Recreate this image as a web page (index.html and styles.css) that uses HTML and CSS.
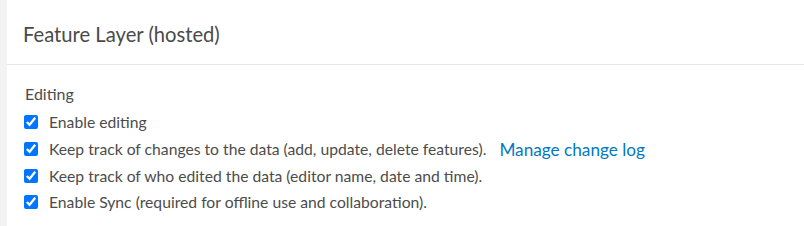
FILE: index.html
```html
<!DOCTYPE html>
<html lang="en">
<head>
<meta charset="UTF-8" />
<title>Feature Layer settings</title>
<link rel="stylesheet" href="styles.css">
</head>
<body>

<div class="page">
    <div class="rail"></div>

    <div class="panel">
        <div class="panel-header">
            <h1>Feature Layer (hosted)</h1>
        </div>

        <div class="section">
            <h2>Editing</h2>
            <label class="option"><input type="checkbox" checked> Enable editing</label>
            <label class="option option-link"><input type="checkbox" checked> Keep track of changes to the data (add, update, delete features).
                <a href="#" class="link">Manage change log</a></label>
            <label class="option"><input type="checkbox" checked> Keep track of who edited the data (editor name, date and time).</label>
            <label class="option"><input type="checkbox" checked> Enable Sync (required for offline use and collaboration).</label>
        </div>
    </div>
</div>

</body>
</html>
```

FILE: styles.css
```css
body {
    font-family: Lato, 'Open Sans', sans-serif;
    margin: 0;
    background: #fff;
    color: #4c4c4c;
}

.page {
    display: flex;
    min-height: 226px;
}

.rail {
    width: 7px;
    background: #f3f3f3;
}

.panel {
    flex: 1;
}

.panel-header {
    height: 65px;
    border-bottom: 1px solid #e8e8e8;
    display: flex;
    align-items: center;
    padding-left: 16px;
    box-sizing: border-box;
}

h1 {
    margin: 0;
    padding-top: 3px;
    font-size: 20.2px;
    font-weight: normal;
    color: #4a4a4a;
}

.section {
    padding: 18px 0 0 17px;
}

h2 {
    margin: 0 0 4px 1px;
    font-size: 16px;
    font-weight: normal;
    line-height: 22px;
}

.option {
    display: flex;
    align-items: center;
    height: 26px;
    font-size: 15.7px;
}

.option-link {
    height: 28px;
}

.option input {
    width: 14px;
    height: 14px;
    margin: 0 11px 0 0;
}

.link {
    color: #0079c1;
    text-decoration: none;
    font-size: 17.2px;
    margin-left: 13px;
}
```
